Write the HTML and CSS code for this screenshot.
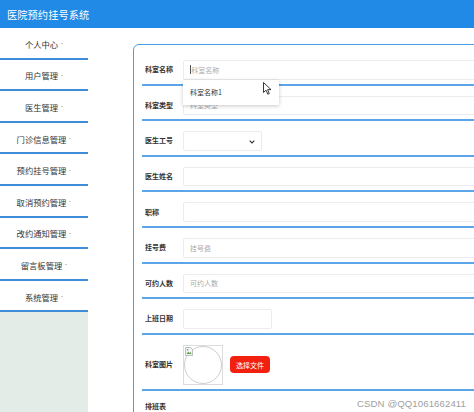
FILE: index.html
```html
<!DOCTYPE html>
<html lang="zh">
<head>
<meta charset="utf-8">
<title>医院预约挂号系统</title>
<link rel="stylesheet" href="styles.css">
</head>
<body>
<header class="topbar"><span class="title">医院预约挂号系统</span></header>
<div class="main">
  <nav class="sidebar">
    <ul class="menu">
      <li class="menu-item">个人中心<span class="caret"></span></li>
      <li class="menu-item">用户管理<span class="caret"></span></li>
      <li class="menu-item">医生管理<span class="caret"></span></li>
      <li class="menu-item">门诊信息管理<span class="caret"></span></li>
      <li class="menu-item">预约挂号管理<span class="caret"></span></li>
      <li class="menu-item">取消预约管理<span class="caret"></span></li>
      <li class="menu-item">改约通知管理<span class="caret"></span></li>
      <li class="menu-item">留言板管理<span class="caret"></span></li>
      <li class="menu-item">系统管理<span class="caret"></span></li>
    </ul>
    <div class="sidebar-fill"></div>
  </nav>
  <section class="content">
    <form class="panel">
      <div class="row">
        <label class="label">科室名称</label>
        <div class="field">
          <div class="input input-wide"><span class="text-caret"></span><span class="ph">科室名称</span></div>
          <div class="suggest">科室名称1</div>
          <svg class="cursor" width="9" height="13" viewBox="0 0 9 13"><path d="M0.5 0.5 L0.5 10.5 L3 8.2 L4.8 12.2 L6.3 11.5 L4.6 7.6 L8 7.6 Z" fill="#fff" stroke="#222" stroke-width="0.9" stroke-linejoin="round"/></svg>
        </div>
      </div>
      <div class="row">
        <label class="label">科室类型</label>
        <div class="field"><div class="input input-wide"><span class="ph">科室类型</span></div></div>
      </div>
      <div class="row">
        <label class="label">医生工号</label>
        <div class="field">
          <div class="input input-select">
            <svg class="chev" width="6" height="4" viewBox="0 0 6 4"><path d="M0.7 0.7 L3 3 L5.3 0.7" fill="none" stroke="#333" stroke-width="1.1"/></svg>
          </div>
        </div>
      </div>
      <div class="row">
        <label class="label">医生姓名</label>
        <div class="field"><div class="input input-wide"></div></div>
      </div>
      <div class="row">
        <label class="label">职称</label>
        <div class="field"><div class="input input-wide"></div></div>
      </div>
      <div class="row">
        <label class="label">挂号费</label>
        <div class="field"><div class="input input-wide"><span class="ph">挂号费</span></div></div>
      </div>
      <div class="row">
        <label class="label">可约人数</label>
        <div class="field"><div class="input input-wide"><span class="ph">可约人数</span></div></div>
      </div>
      <div class="row">
        <label class="label">上班日期</label>
        <div class="field"><div class="input input-date"></div></div>
      </div>
      <div class="row row-image">
        <label class="label">科室图片</label>
        <div class="field field-image">
          <div class="thumb">
            <div class="thumb-circle"></div>
            <svg class="broken" width="8" height="9" viewBox="0 0 8 9"><path d="M0.5 0.5 H5.5 L7.5 2.5 V8.5 H0.5 Z" fill="#f4f4f4" stroke="#9aa" stroke-width="0.7"/><path d="M1.5 7 L3.2 4.6 L4.6 6 L5.6 5 L6.5 7 Z" fill="#6a9f4c"/><circle cx="2.6" cy="2.8" r="0.8" fill="#5b8fd0"/></svg>
          </div>
          <button type="button" class="btn-file">选择文件</button>
        </div>
      </div>
      <div class="row row-last">
        <label class="label">排班表</label>
      </div>
    </form>
  </section>
</div>
<div class="watermark">CSDN @QQ1061662411</div>
</body>
</html>
```

FILE: styles.css
```css
* { box-sizing: border-box; }
html, body {
  margin: 0;
  padding: 0;
  width: 474px;
  height: 412px;
  overflow: hidden;
  background: #fff;
  font-family: "Noto Sans CJK SC", "Noto Sans", sans-serif;
  color: #333;
}
.topbar {
  height: 28px;
  background: #2189e6;
  display: flex;
  align-items: center;
  padding-left: 7px;
}
.title {
  color: #fff;
  font-size: 10.2px;
  letter-spacing: 0.1px;
}
.main {
  display: flex;
  height: 384px;
}
.sidebar {
  width: 88px;
  display: flex;
  flex-direction: column;
  flex-shrink: 0;
}
.menu {
  list-style: none;
  margin: 0;
  padding: 0;
}
.menu-item {
  height: 31.6px;
  border-bottom: 2px solid #3f8cd8;
  display: flex;
  align-items: center;
  justify-content: center;
  font-size: 8.3px;
  color: #333;
  padding-top: 2px;
}
.caret {
  display: inline-block;
  width: 0;
  height: 0;
  margin-left: 3px;
  border-left: 1.6px solid transparent;
  border-right: 1.6px solid transparent;
  border-top: 1.6px solid #999;
}
.sidebar-fill {
  flex: 1;
  background: #e4ece8;
}
.content {
  flex: 1;
  padding: 16px 0 0 45px;
  overflow: hidden;
}
.panel {
  width: 420px;
  border: 1.5px solid #4d9fe3;
  border-radius: 6px;
  padding: 5px 0 0 8px;
  height: 400px;
}
.row {
  display: flex;
  align-items: center;
  padding: 10px 0 4px;
  border-bottom: 2px solid #5aa6e8;
}
.row-last {
  border-bottom: none;
  padding-top: 11px;
}
.label {
  width: 41px;
  padding-left: 3px;
  font-size: 7px;
  font-weight: bold;
  color: #333;
  flex-shrink: 0;
  line-height: 9px;
}
.field {
  position: relative;
  display: flex;
  align-items: center;
  flex: 1;
}
.input {
  height: 19.6px;
  border: 1px solid #ececec;
  border-radius: 2px;
  background: #fff;
  display: flex;
  align-items: center;
  padding-left: 6px;
  font-size: 7px;
  position: relative;
}
.input-wide { width: 100%; }
.input-select { width: 79px; }
.input-date { width: 89px; }
.ph { color: #aaa; }
.text-caret {
  width: 0.7px;
  height: 9px;
  background: #555;
  margin-right: 0.5px;
}
.chev {
  position: absolute;
  right: 6px;
  top: 8px;
}
.suggest {
  position: absolute;
  left: 0;
  top: 19.6px;
  width: 96px;
  height: 25px;
  background: #fff;
  box-shadow: 0 1px 4px rgba(0, 0, 0, 0.22);
  font-size: 7px;
  color: #333;
  padding-left: 7px;
  line-height: 25px;
  z-index: 2;
}
.cursor {
  position: absolute;
  left: 80px;
  top: 22px;
  z-index: 3;
}
.field-image { gap: 7px; }
.thumb {
  position: relative;
  width: 40px;
  height: 40px;
  border: 1px solid #dcdcdc;
}
.thumb-circle {
  width: 38px;
  height: 38px;
  border: 1px solid #cfcfcf;
  border-radius: 50%;
}
.broken {
  position: absolute;
  left: 1px;
  top: 1px;
}
.btn-file {
  width: 40px;
  height: 17px;
  border: none;
  border-radius: 4px;
  background: #f2200f;
  color: #fff;
  font-family: "Noto Sans CJK SC", "Noto Sans", sans-serif;
  font-size: 7px;
  padding: 0;
}
.watermark {
  position: absolute;
  right: 8px;
  bottom: 3px;
  font-family: "Liberation Sans", Arial, sans-serif;
  font-size: 9.6px;
  color: #a0a0a0;
  letter-spacing: 0.1px;
}
```
